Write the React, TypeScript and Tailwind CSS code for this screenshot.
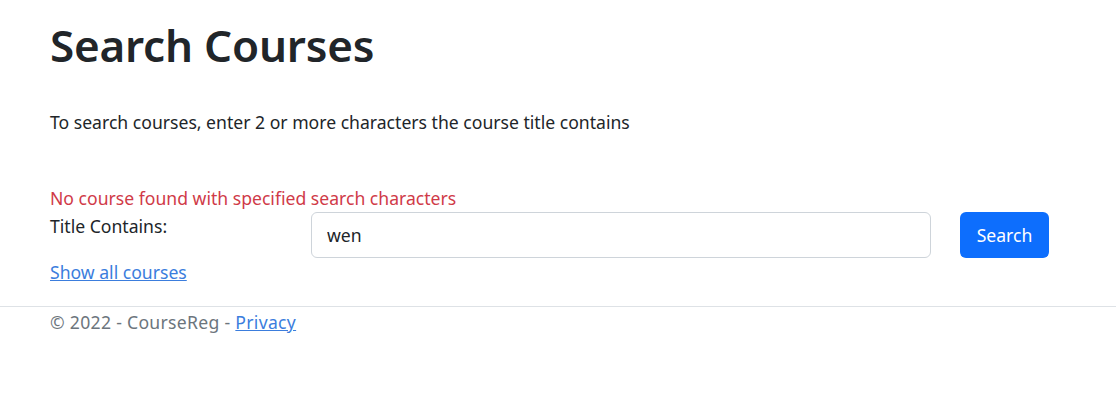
import React from "react";

export default function App() {
  return (
    <div className="w-[1116px] h-[404px] bg-white text-[#212529] text-[17.6px] leading-[26px]" style={{ fontFamily: '"Noto Sans", "Segoe UI", sans-serif' }}>
      <div className="pl-[50px] pr-[60px]">
        <h1 className="pt-[19px] text-[44px] leading-[53px] font-semibold tracking-[-0.2px]">Search Courses</h1>
        <p className="mt-[37px]">To search courses, enter 2 or more characters the course title contains</p>
        <div className="mt-[50px] text-[#d03a48]">No course found with specified search characters</div>
        <div className="flex items-start">
          <div className="w-[261px] shrink-0">
            <div className="pt-[2px]">Title Contains:</div>
            <a href="#" className="block mt-[20px] text-[#3b7ddd] underline">Show all courses</a>
          </div>
          <input
            readOnly
            value="wen"
            className="mt-[1px] w-[620px] shrink-0 h-[46px] border border-[#ced4da] rounded-md px-[15px] text-[17.6px] text-[#212529] outline-none"
          />
          <button className="ml-[29px] shrink-0 mt-[1px] w-[89px] h-[46px] rounded-md bg-[#0d6efd] text-white text-[17.6px]">Search</button>
        </div>
      </div>
      <div className="mt-[21px] border-t border-[#dee2e6] pl-[50px] pt-[2px] text-[#6c757d] tracking-[0.3px]">
        © 2022 - CourseReg - <a href="#" className="text-[#3b7ddd] underline">Privacy</a>
      </div>
    </div>
  );
}
